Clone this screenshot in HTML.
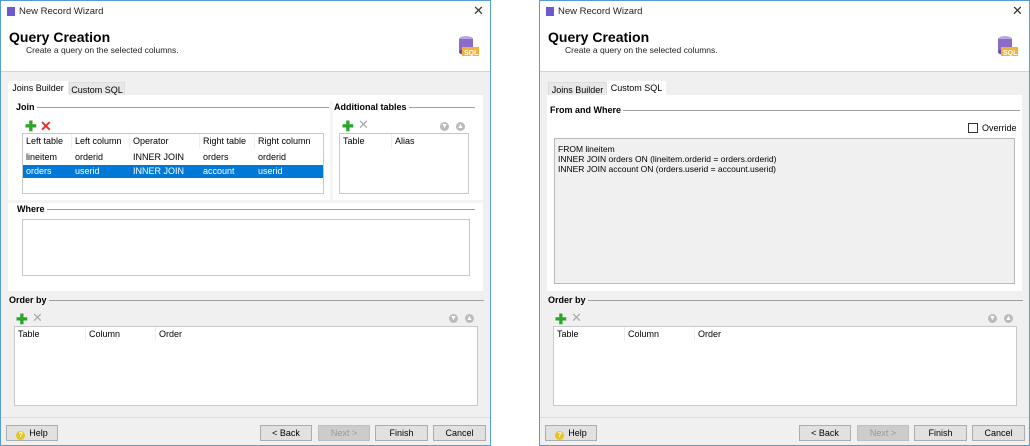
<!DOCTYPE html>
<html><head><style>
*{margin:0;padding:0;box-sizing:border-box}
body{width:1030px;height:446px;background:#fff;position:relative;overflow:hidden;font-family:"Liberation Sans",sans-serif;font-size:9px;color:#000}
.win{position:absolute;top:0;width:491px;height:446px;background:#f0f0f0;border:1px solid #5b9bd5}
.a{position:absolute}
.hdr{left:0;top:0;width:489px;height:71px;background:#fff;border-bottom:1px solid #d5d5d5}
.panel{background:#fff}
.gh{position:absolute;display:flex;align-items:center;font-weight:bold;font-size:9px}
.gh i{flex:1;height:1px;background:#a0a0a0;margin-left:2px}
.tbl{background:#fff;border:1px solid #c8c8c8}
.btn{height:16px;background:#e1e1e1;border:1px solid #adadad;text-align:center;line-height:14px;font-size:9px}
.tab{height:15px;line-height:14px;font-size:9px;text-align:center}
.col{position:absolute;top:0;height:14px;line-height:14px;border-right:1px solid #eee;padding-left:3px}
.row{position:absolute;left:0;height:13px;line-height:13px}
.row span{position:absolute;padding-left:3px}
.plus{color:#2aa52a;font-weight:bold;font-size:14px;line-height:12px}
.gx{color:#aaa;font-size:13px;line-height:12px}
.circ{width:9px;height:9px;border-radius:50%;background:#bbb;color:#fff;font-size:7px;line-height:9px;text-align:center}
</style></head><body>

<div class="win" style="left:0">
 <div class="a hdr"></div>
 <div class="a" style="left:6px;top:6px;width:8px;height:9px;background:#6a5acd"></div>
 <div class="a" style="left:18px;top:5px;font-size:9.5px;color:#222">New Record Wizard</div>
 <div class="a" style="left:472px;top:2px;font-size:13px;color:#333">✕</div>
 <div class="a" style="left:8px;top:28px;font-size:14px;font-weight:bold">Query Creation</div>
 <div class="a" style="left:25px;top:44px;font-size:8.5px;color:#222">Create a query on the selected columns.</div>
 <svg class="a" style="left:455px;top:34px" width="24" height="24"><ellipse cx="10" cy="4" rx="7" ry="3" fill="#b9a6e0"/><rect x="3" y="4" width="14" height="13" fill="#8a6cc8"/><ellipse cx="10" cy="17" rx="7" ry="3" fill="#6a4ab0"/><rect x="6" y="12" width="17" height="9" fill="#f2b233"/><text x="8" y="20" font-size="7" fill="#fff" font-weight="bold" font-family="Liberation Sans">SQL</text></svg>
 <div class="a tab panel" style="left:7px;top:80px;width:60px;height:15px">Joins Builder</div>
 <div class="a tab" style="left:68px;top:81px;width:56px;background:#e8e8e8;border:1px solid #ddd;border-bottom:none">Custom SQL</div>
 <div class="a panel" style="left:7px;top:94px;width:475px;height:196px"></div>
 <div class="gh" style="left:15px;top:101px;width:313px">Join<i></i></div>
 <div class="a plus" style="left:24px;top:119px">✚</div>
 <div class="a" style="left:39px;top:117px;color:#e53030;font-size:14px;font-weight:bold">✕</div>
 <div class="a tbl" style="left:21px;top:132px;width:302px;height:61px">
  <div class="col" style="left:0;width:49px">Left table</div>
  <div class="col" style="left:49px;width:58px">Left column</div>
  <div class="col" style="left:107px;width:70px">Operator</div>
  <div class="col" style="left:177px;width:55px">Right table</div>
  <div class="col" style="left:232px;width:68px;border:none">Right column</div>
  <div class="row" style="top:17px;width:300px"><span style="left:0">lineitem</span><span style="left:49px">orderid</span><span style="left:107px">INNER JOIN</span><span style="left:177px">orders</span><span style="left:232px">orderid</span></div>
  <div class="row" style="top:31px;width:300px;background:#0078d7;color:#fff"><span style="left:0">orders</span><span style="left:49px">userid</span><span style="left:107px">INNER JOIN</span><span style="left:177px">account</span><span style="left:232px">userid</span></div>
 </div>
 <div class="a" style="left:329px;top:100px;width:3px;height:100px;background:#f4f4f4"></div>
 <div class="gh" style="left:333px;top:101px;width:141px">Additional tables<i></i></div>
 <div class="a plus" style="left:341px;top:119px">✚</div>
 <div class="a gx" style="left:357px;top:118px">✕</div>
 <div class="a circ" style="left:439px;top:121px">▼</div>
 <div class="a circ" style="left:455px;top:121px">▲</div>
 <div class="a tbl" style="left:338px;top:132px;width:130px;height:61px">
  <div class="col" style="left:0;width:52px">Table</div>
  <div class="col" style="left:52px;width:60px;border:none">Alias</div>
 </div>
 <div class="a" style="left:7px;top:199px;width:475px;height:3px;background:#f4f4f4"></div>
 <div class="gh" style="left:16px;top:203px;width:458px">Where<i></i></div>
 <div class="a tbl" style="left:21px;top:218px;width:448px;height:57px"></div>
 <div class="gh" style="left:8px;top:294px;width:475px">Order by<i></i></div>
 <div class="a plus" style="left:15px;top:312px">✚</div>
 <div class="a gx" style="left:31px;top:311px">✕</div>
 <div class="a circ" style="left:448px;top:313px">▼</div>
 <div class="a circ" style="left:464px;top:313px">▲</div>
 <div class="a tbl" style="left:13px;top:325px;width:464px;height:80px">
  <div class="col" style="left:0;width:71px">Table</div>
  <div class="col" style="left:71px;width:70px">Column</div>
  <div class="col" style="left:141px;width:70px;border:none">Order</div>
 </div>
 <div class="a" style="left:0;top:416px;width:489px;height:1px;background:#dcdcdc"></div>
 <div class="a btn" style="left:5px;top:424px;width:52px"><span style="display:inline-block;width:9px;height:9px;border-radius:50%;background:#e6c619;color:#fff;font-size:7px;line-height:9px;font-weight:bold;vertical-align:-1px;margin-right:4px">?</span>Help</div>
 <div class="a btn" style="left:259px;top:424px;width:52px">&lt; Back</div>
 <div class="a btn" style="left:317px;top:424px;width:52px;color:#999;background:#ccc;border-color:#bfbfbf">Next &gt;</div>
 <div class="a btn" style="left:374px;top:424px;width:53px">Finish</div>
 <div class="a btn" style="left:432px;top:424px;width:53px">Cancel</div>
</div>

<div class="win" style="left:539px">
 <div class="a hdr"></div>
 <div class="a" style="left:6px;top:6px;width:8px;height:9px;background:#6a5acd"></div>
 <div class="a" style="left:18px;top:5px;font-size:9.5px;color:#222">New Record Wizard</div>
 <div class="a" style="left:472px;top:2px;font-size:13px;color:#333">✕</div>
 <div class="a" style="left:8px;top:28px;font-size:14px;font-weight:bold">Query Creation</div>
 <div class="a" style="left:25px;top:44px;font-size:8.5px;color:#222">Create a query on the selected columns.</div>
 <svg class="a" style="left:455px;top:34px" width="24" height="24"><ellipse cx="10" cy="4" rx="7" ry="3" fill="#b9a6e0"/><rect x="3" y="4" width="14" height="13" fill="#8a6cc8"/><ellipse cx="10" cy="17" rx="7" ry="3" fill="#6a4ab0"/><rect x="6" y="12" width="17" height="9" fill="#f2b233"/><text x="8" y="20" font-size="7" fill="#fff" font-weight="bold" font-family="Liberation Sans">SQL</text></svg>
 <div class="a tab" style="left:8px;top:81px;width:59px;background:#e8e8e8;border:1px solid #ddd;border-bottom:none">Joins Builder</div>
 <div class="a tab panel" style="left:67px;top:80px;width:59px;height:15px">Custom SQL</div>
 <div class="a panel" style="left:7px;top:94px;width:475px;height:196px"></div>
 <div class="gh" style="left:10px;top:104px;width:470px">From and Where<i></i></div>
 <div class="a" style="left:428px;top:122px;width:10px;height:10px;border:1px solid #333;background:#fff"></div>
 <div class="a" style="left:442px;top:122px">Override</div>
 <div class="a" style="left:14px;top:137px;width:461px;height:146px;background:#f0f0f0;border:1px solid #b8b8b8;padding:5px 3px;line-height:10px;font-size:8.5px">FROM lineitem<br>INNER JOIN orders ON (lineitem.orderid = orders.orderid)<br>INNER JOIN account ON (orders.userid = account.userid)</div>
 <div class="gh" style="left:8px;top:294px;width:475px">Order by<i></i></div>
 <div class="a plus" style="left:15px;top:312px">✚</div>
 <div class="a gx" style="left:31px;top:311px">✕</div>
 <div class="a circ" style="left:448px;top:313px">▼</div>
 <div class="a circ" style="left:464px;top:313px">▲</div>
 <div class="a tbl" style="left:13px;top:325px;width:464px;height:80px">
  <div class="col" style="left:0;width:71px">Table</div>
  <div class="col" style="left:71px;width:70px">Column</div>
  <div class="col" style="left:141px;width:70px;border:none">Order</div>
 </div>
 <div class="a" style="left:0;top:416px;width:489px;height:1px;background:#dcdcdc"></div>
 <div class="a btn" style="left:5px;top:424px;width:52px"><span style="display:inline-block;width:9px;height:9px;border-radius:50%;background:#e6c619;color:#fff;font-size:7px;line-height:9px;font-weight:bold;vertical-align:-1px;margin-right:4px">?</span>Help</div>
 <div class="a btn" style="left:259px;top:424px;width:52px">&lt; Back</div>
 <div class="a btn" style="left:317px;top:424px;width:52px;color:#999;background:#ccc;border-color:#bfbfbf">Next &gt;</div>
 <div class="a btn" style="left:374px;top:424px;width:53px">Finish</div>
 <div class="a btn" style="left:432px;top:424px;width:53px">Cancel</div>
</div>
</body></html>
